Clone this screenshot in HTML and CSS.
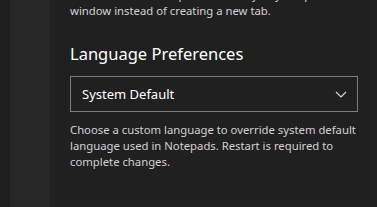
FILE: index.html
```html
<!DOCTYPE html>
<html lang="en">
<head>
  <meta charset="UTF-8">
  <meta name="viewport" content="width=device-width, initial-scale=1.0">
  <title>Settings</title>
  <link rel="stylesheet" href="styles.css">
</head>
<body>

<div class="shell">
  <div class="rail"></div>
  <div class="pane"></div>

  <main class="content">
    <p class="note note-top">When enabled, Notepads will always try to open a new<br>window instead of creating a new tab.</p>

    <h2 class="section-title">Language Preferences</h2>

    <div class="select">
      <span class="select-value">System Default</span>
      <svg class="chevron" width="12" height="7" viewBox="0 0 12 7">
        <path d="M1 1 L6 6 L11 1" fill="none" stroke="#d6d6d6" stroke-width="1.2"/>
      </svg>
    </div>

    <p class="note">Choose a custom language to override system default language used in Notepads. Restart is required to complete changes.</p>
  </main>
</div>

</body>
</html>
```

FILE: styles.css
```css
body {
  margin: 0;
  background-color: #202020;
  font-family: "Noto Sans", "Open Sans", sans-serif;
  overflow: hidden;
}

.shell {
  display: flex;
  height: 207px;
}

.rail {
  width: 10px;
  background-color: #1e1e1e;
}

.pane {
  width: 40px;
  background-color: #272727;
}

.content {
  flex: 1;
  padding-left: 20px;
  overflow: hidden;
}

.note {
  width: 290px;
  margin: 0;
  color: #d2d2d2;
  font-size: 11.3px;
  line-height: 16px;
}

.note-top {
  margin-top: -13px;
  white-space: nowrap;
}

.section-title {
  margin: 23px 0 10px 0;
  color: #ffffff;
  font-size: 16.5px;
  font-weight: 400;
  line-height: 24px;
}

.select {
  box-sizing: border-box;
  width: 288px;
  height: 36px;
  border: 1px solid #7c7c7c;
  display: flex;
  align-items: center;
  justify-content: space-between;
  padding: 0 10px 0 11px;
  margin-bottom: 10px;
}

.select-value {
  color: #ffffff;
  font-size: 13px;
}

.chevron {
  display: block;
}
```
